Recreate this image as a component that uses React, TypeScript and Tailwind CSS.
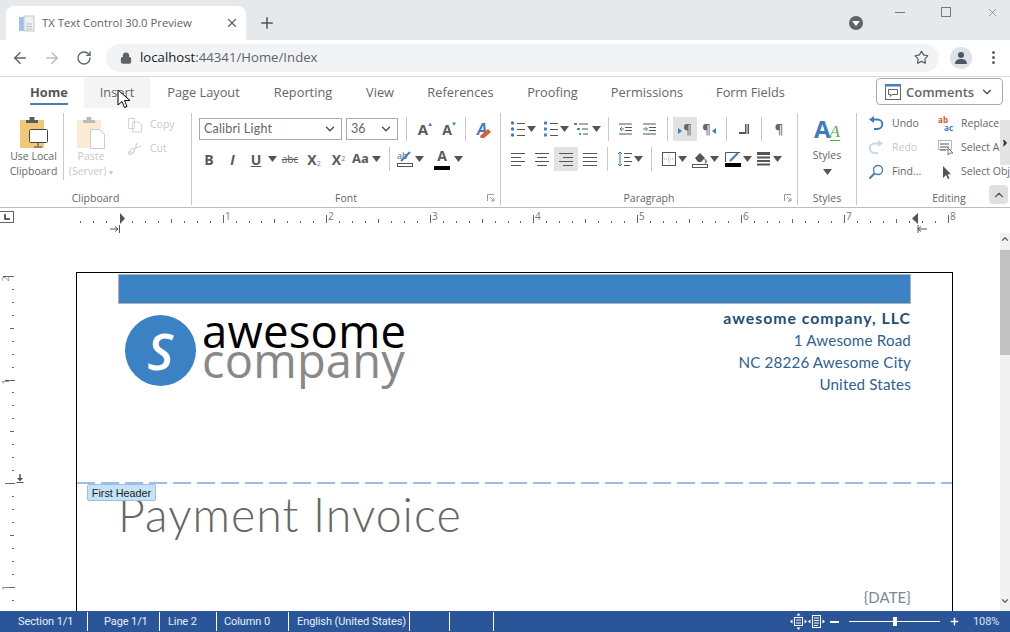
import React from 'react'
import { ArrowLeft, ArrowRight, RotateCw, Lock, Star, X, Plus, ChevronDown, ChevronUp, ChevronRight } from 'lucide-react'

const ui = "font-['Open_Sans',sans-serif]"

const Caret = ({ color = '#555' }: { color?: string }) => (
    <svg width="9" height="6" viewBox="0 0 9 6" className="shrink-0"><path d="M0 0h9L4.5 6z" fill={color} /></svg>
)

const Sep = ({ className = '' }: { className?: string }) => <div className={`w-px h-6 bg-[#c8c8c8] shrink-0 ${className}`} />

const Lines = ({ rows }: { rows: number[][] }) => (
    <svg width="16" height="14" viewBox="0 0 16 14" fill="none" stroke="#555" strokeWidth="1">
        {rows.map((r, i) => <line key={i} x1={r[0]} x2={r[1]} y1={i * 4 + 1.5} y2={i * 4 + 1.5} />)}
    </svg>
)

const BulletIcon = ({ kind }: { kind: 'dot' | 'num' | 'multi' }) => (
    <svg width="16" height="16" viewBox="0 0 16 16" fill="none">
        {kind === 'multi' ? (
            <>
                <rect x="1" y="2" width="3" height="2" fill="#4a86c5" /><rect x="4" y="7" width="3" height="2" fill="#4a86c5" /><rect x="6" y="12" width="2" height="2" fill="#4a86c5" />
                <path d="M6 3h9M9 8h6M10 13h5" stroke="#555" />
            </>
        ) : (
            <>
                {[2, 8, 14].map((y) => kind === 'dot'
                    ? <circle key={y} cx="2.5" cy={y} r="1.7" fill="#3f7cbd" />
                    : <rect key={y} x="1" y={y - 1.5} width="3" height="3" fill="#4a86c5" />)}
                <path d="M7 2.500h8M7 8.500h8M7 14.500h8" stroke="#555" />
            </>
        )}
    </svg>
)

const IndentIcon = ({ flip }: { flip?: boolean }) => (
    <svg width="14" height="12" viewBox="0 0 14 12" fill="none">
        <path d="M1 1h13M7 4.500h7M7 7.500h7M1 11h13" stroke="#555" />
        <path d={flip ? 'M1 6h4M3.500 4l2 2-2 2' : 'M2 6h4M4 4 2 6l2 2'} stroke="#3f7cbd" />
    </svg>
)

const ParaMark = ({ box, dot }: { box?: boolean; dot?: 'l' | 'r' }) => (
    <div className={`w-6 h-6 flex items-center justify-center text-[13px] font-semibold text-[#666] leading-none ${box ? 'bg-[#e2e2e2]' : ''}`}>
        {dot === 'l' && <svg width="4" height="6" viewBox="0 0 4 6" className="mr-px mt-1"><path d="M0 0l4 3-4 3z" fill="#3f7cbd" /></svg>}
        <span>¶</span>
        {dot === 'r' && <svg width="4" height="6" viewBox="0 0 4 6" className="ml-px mt-1"><path d="M4 0 0 3l4 3z" fill="#3f7cbd" /></svg>}
    </div>
)

function RulerH() {
    const zero = 119
    const inch = 103.6
    const marks = []
    for (let i = -3; i <= 66; i++) {
        if (i === 0) continue
        const x = Math.round(zero + (i * inch) / 8)
        if (x > 955 || x < 79) continue
        if (i % 8 === 0) marks.push(<line key={i} x1={x + 0.5} x2={x + 0.5} y1="7" y2="15" stroke="#666" />)
        else if (i % 4 === 0) marks.push(<line key={i} x1={x + 0.5} x2={x + 0.5} y1="11" y2="15" stroke="#666" />)
        else marks.push(<rect key={i} x={x} y="13" width="1" height="2" fill="#666" />)
    }
    return (
        <svg width="1010" height="25" viewBox="0 0 1010 25" className="absolute left-0 top-0">
            {marks}
            {[1, 2, 3, 4, 5, 6, 7, 8].map((n) => (
                <text key={n} x={Math.round(zero + n * inch) + 2} y="12" fontSize="10" fill="#777" fontFamily="Open Sans, sans-serif">{n}</text>
            ))}
            <path d="M120 5v11l5-5.500z" fill="#555" />
            <path d="M110 21h8M115 18.500l3 2.500-3 2.500M119.500 17v8" stroke="#555" fill="none" />
            <path d="M918 5v11l-6-5.500z" fill="#555" />
            <path d="M918 21h9M921 18.500l-3 2.500 3 2.500M918 17v8" stroke="#555" fill="none" />
        </svg>
    )
}

function RulerV() {
    const ticks = []
    for (let i = 0; i < 27; i++) {
        const y = 289 + i * 13 - 233 - (i > 7 ? 1 : 0)
        const abs = i + 1
        if (abs % 8 === 0) ticks.push(<rect key={i} x="5" y={y} width="10" height="1" fill="#666" />)
        else if (abs % 4 === 0) ticks.push(<rect key={i} x="10" y={y} width="4" height="1" fill="#666" />)
        else ticks.push(<rect key={i} x="12" y={y} width="2" height="1" fill="#666" />)
    }
    return (
        <svg width="76" height="378" viewBox="0 0 76 378" className="shrink-0">
            <rect x="3" y="43" width="11" height="1" fill="#666" />
            {ticks}
            {[[9, 46, 2], [9, 149, 1], [9, 355, 1]].map(([x, y, n]) => (
                <text key={y} x={x} y={y} fontSize="9" fill="#888" fontFamily="Open Sans, sans-serif" textAnchor="middle" transform={`rotate(-90 ${x} ${y})`}>{n}</text>
            ))}
            <path d="M20 241v6" stroke="#555" strokeWidth="1.500" />
            <path d="M17 245h6l-3 3.500z" fill="#555" />
            <path d="M16.500 249.500h7" stroke="#555" />
        </svg>
    )
}

export default function App() {
    const tabs = [
        { name: 'Home', w: 'w-[70px]' },
        { name: 'Insert', w: 'w-[66px]' },
        { name: 'Page Layout', w: 'w-[107px]' },
        { name: 'Reporting', w: 'w-[92px]' },
        { name: 'View', w: 'w-[62px]' },
        { name: 'References', w: 'w-[99px]' },
        { name: 'Proofing', w: 'w-[85px]' },
        { name: 'Permissions', w: 'w-[104px]' },
        { name: 'Form Fields', w: 'w-[103px]' },
    ]
    return (
        <div className={`w-[1010px] h-[632px] overflow-hidden flex flex-col relative bg-white text-[#666] ${ui}`}>
            {/* Browser tab strip */}
            <div className="h-10 bg-[#e6e9ec] flex shrink-0">
                <div className="ml-1.5 mt-1.5 w-60 h-[34px] bg-white rounded-t-lg flex items-center pl-[13px] pr-2">
                    <svg width="16" height="17" viewBox="0 0 16 17" className="shrink-0">
                        <rect x="0" y="2" width="6" height="14" fill="#9cc3e8" />
                        <rect x="5" y="1" width="10" height="15" fill="#eef0f3" stroke="#c4c9d0" />
                        <path d="M7 9h6M7 11.500h6M7 14h6" stroke="#b5bac2" />
                    </svg>
                    <span className="ml-[7px] text-[11.3px] text-[#5f6368] whitespace-nowrap">TX Text Control 30.0 Preview</span>
                    <X size={14} strokeWidth={2} className="ml-auto text-[#5f6368] -mr-px" />
                </div>
                <Plus size={18} strokeWidth={2} className="ml-3 mt-3.5 text-[#555]" />
                <div className="ml-auto flex items-start -mr-[5px]">
                    <div className="mt-4 mr-[14px] w-[14px] h-[14px] rounded-full bg-[#5f6368] flex items-center justify-center">
                        <svg width="8" height="5" viewBox="0 0 8 5"><path d="M0 0h8L4 5z" fill="#fff" /></svg>
                    </div>
                    <div className="w-[46px] h-6 flex items-center justify-center"><div className="w-[10px] h-px bg-[#777]" /></div>
                    <div className="w-[46px] h-6 flex items-center justify-center"><div className="w-[10px] h-[10px] border border-[#777]" /></div>
                    <div className="w-[46px] h-6 flex items-center justify-center"><X size={13} strokeWidth={1} className="text-[#555]" /></div>
                </div>
            </div>

            {/* Address bar */}
            <div className="h-[37px] border-b border-[#dadada] flex items-center shrink-0 pb-px">
                <ArrowLeft size={18} strokeWidth={2} className="ml-[11px] text-[#5f6368]" />
                <ArrowRight size={18} strokeWidth={2} className="ml-[14px] text-[#b9bcbf]" />
                <RotateCw size={16} strokeWidth={2} className="ml-[15px] text-[#5f6368]" />
                <div className="ml-[14px] w-[833px] h-7 rounded-full bg-[#f1f3f4] flex items-center pl-3.5 pr-2.5">
                    <Lock size={12} strokeWidth={2.5} fill="#5f6368" className="text-[#5f6368]" />
                    <span className="ml-[8px] mt-px text-[13.2px] text-[#202124]">localhost<span className="text-[#5f6368]">:44341/Home/Index</span></span>
                    <Star size={15} strokeWidth={2} className="ml-auto text-[#5f6368]" />
                </div>
                <div className="ml-[11px] w-[22px] h-[22px] rounded-full bg-[#dee1e6] flex items-center justify-center">
                    <svg width="14" height="14" viewBox="0 0 14 14"><circle cx="7" cy="4" r="3" fill="#4b5565" /><path d="M1 13c0-4 3-5 6-5s6 1 6 5z" fill="#4b5565" /></svg>
                </div>
                <div className="ml-[20px] flex flex-col gap-[2px]">
                    <div className="w-[3px] h-[3px] rounded-full bg-[#5f6368]" />
                    <div className="w-[3px] h-[3px] rounded-full bg-[#5f6368]" />
                    <div className="w-[3px] h-[3px] rounded-full bg-[#5f6368]" />
                </div>
            </div>

            {/* Ribbon tabs */}
            <div className="h-[31px] flex shrink-0 pl-[14px]">
                {tabs.map((t) => (
                    <div key={t.name} className={`${t.w} h-full relative flex justify-center items-center text-[12.8px] shrink-0 ${t.name === 'Insert' ? 'bg-[#f4f4f4]' : ''} ${t.name === 'Home' ? 'font-bold text-[#555]' : ''}`}>
                        {t.name}
                        {t.name === 'Home' && <div className="absolute bottom-[3px] left-4 w-[38px] h-[2px] bg-[#4a7ebb]" />}
                    </div>
                ))}
                <div className="ml-auto mr-[7px] mt-px w-[127px] h-[27px] border border-[#aaa] rounded-sm flex items-center pl-2">
                    <svg width="16" height="16" viewBox="0 0 16 16" fill="none" className="shrink-0">
                        <rect x="0.500" y="1" width="15" height="14.500" fill="#fff" stroke="#666" />
                        <rect x="0" y="0" width="16" height="2.500" fill="#4a7ebb" />
                        <path d="M3.500 5.500h9v5H7l-1.500 2v-2h-2z" stroke="#666" />
                    </svg>
                    <span className="ml-[5px] mt-[2px] text-[13px] font-semibold text-[#666]">Comments</span>
                    <ChevronDown size={14} strokeWidth={2} className="ml-[6px] text-[#444]" />
                </div>
            </div>

            {/* Ribbon */}
            <div className="h-[100px] border-b border-[#bdbdbd] flex shrink-0 relative text-[10.5px] overflow-hidden">
                {/* Clipboard */}
                <div className="w-[192px] shrink-0 mt-[5px] h-[92px] border-r border-[#c8c8c8] relative flex flex-col">
                    <div className="flex flex-1">
                        <div className="w-[64px] h-[67px] border-r border-[#c8c8c8] flex flex-col items-center pr-[1px] pl-[5px]">
                            <svg width="30" height="34" viewBox="0 0 30 34" className="mt-[3px] shrink-0">
                                <rect x="1" y="4" width="24" height="28" fill="#f0c878" />
                                <path d="M7 4h12v3H7zM10.500 1h5v3h-5z" fill="#5c5c5c" />
                                <rect x="10.500" y="13.500" width="18" height="13" rx="1" fill="#fff" stroke="#444" />
                                <path d="M19 27v3M15 31h8" stroke="#444" />
                            </svg>
                            <div className="text-center leading-[15px] whitespace-nowrap -mt-px">Use Local<br />Clipboard</div>
                        </div>
                        <div className="w-[54px] flex flex-col items-center text-[#c9c9c9]">
                            <svg width="30" height="34" viewBox="0 0 30 34" className="mt-[3px] shrink-0">
                                <rect x="1" y="4" width="24" height="28" fill="#faebd2" />
                                <path d="M7 4h12v3H7zM10.500 1h5v3h-5z" fill="#bbb" />
                                <path d="M14.500 13.500h9l5 5v14h-14z" fill="#fff" stroke="#ccc" />
                            </svg>
                            <div className="text-center leading-[15px] whitespace-nowrap -mt-px">Paste<br />(Server) <span className="text-[8px]">▾</span></div>
                        </div>
                        <div className="flex flex-col text-[#c9c9c9]">
                            <div className="h-6 flex items-center ml-[9px]">
                                <svg width="16" height="16" viewBox="0 0 16 16" fill="none" stroke="#d4d4d4"><path d="M1.500 1.500h6v10h-6zM5.500 5h6l3 3v7h-9z" fill="#fff" /></svg>
                                <span className="ml-[7px]">Copy</span>
                            </div>
                            <div className="h-6 flex items-center ml-[9px]">
                                <svg width="16" height="16" viewBox="0 0 16 16" fill="none" stroke="#d4d4d4" strokeWidth="1.300"><path d="M14 5 3 9M10 2 6 13" /><circle cx="3" cy="12" r="1.500" /></svg>
                                <span className="ml-[7px]">Cut</span>
                            </div>
                        </div>
                    </div>
                    <div className="absolute left-0 right-0 -bottom-[2px] text-center">Clipboard</div>
                </div>

                {/* Font */}
                <div className="w-[309px] shrink-0 mt-[5px] h-[92px] border-r border-[#c8c8c8] relative">
                    <div className="flex items-center h-[24px] mt-[4px] pl-[7px]">
                        <div className="w-[143px] h-[22px] border border-[#aaa] flex items-center px-[4px] text-[12.5px] text-[#666]">
                            <span className="font-['Lato',sans-serif] tracking-[0.2px]">Calibri Light</span>
                            <ChevronDown size={14} strokeWidth={2.5} className="ml-auto text-[#555]" />
                        </div>
                        <div className="ml-1 w-[52px] h-[22px] border border-[#aaa] flex items-center px-[4px] text-[12.5px]">
                            <span className="font-['Lato',sans-serif]">36</span>
                            <ChevronDown size={14} strokeWidth={2.5} className="ml-auto text-[#555]" />
                        </div>
                        <Sep className="ml-[8px]" />
                        <div className="ml-[4px] w-6 h-6 flex items-center justify-center text-[15px] font-bold text-[#5a5a5a] relative">A<span className="text-[#3f7cbd] text-[6px] absolute top-[3px] right-[2px]">▲</span></div>
                        <div className="w-6 h-6 flex items-center justify-center text-[14px] font-bold text-[#5a5a5a] relative">A<span className="text-[#3f7cbd] text-[6px] absolute top-[3px] right-[2px]">▼</span></div>
                        <Sep className="ml-[6px]" />
                        <div className="ml-[4px] w-6 h-6 relative flex items-center justify-center text-[16px] font-bold italic text-[#3f7cbd]">
                            A
                            <svg width="14" height="12" viewBox="0 0 14 12" className="absolute right-[2px] bottom-[2px]"><path d="M2 9 10 2l3 3-7 6H3z" fill="#e05a2b" /></svg>
                        </div>
                    </div>
                    <div className="flex items-center h-6 mt-[6px] pl-[5px] text-[#5a5a5a] font-bold">
                        <div className="w-6 text-center text-[14px]">B</div>
                        <div className="w-[23px] text-center text-[14px] italic">I</div>
                        <div className="w-[24px] text-center text-[14px] underline">U</div>
                        <Caret />
                        <div className="ml-[1px] w-6 text-center text-[10px] font-normal line-through">abc</div>
                        <div className="w-6 text-center text-[14px]">X<sub className="text-[7px] text-[#4a86c5] font-normal">2</sub></div>
                        <div className="w-[25px] text-center text-[14px]">X<sup className="text-[7px] text-[#4a86c5] font-normal">2</sup></div>
                        <div className="ml-px w-[19px] text-[13px] whitespace-nowrap">Aa</div>
                        <div className="ml-[1px]"><Caret /></div>
                        <Sep className="ml-[8px]" />
                        <div className="ml-[6px] w-[19px] relative h-6">
                            <span className="absolute top-[2px] left-[1px] text-[9px] font-normal text-[#666]">ab</span>
                            <svg width="19" height="20" viewBox="0 0 19 20" className="absolute left-0 top-[2px]" fill="none">
                                <path d="M5 12 14 3" stroke="#3f7cbd" strokeWidth="2" />
                                <rect x="1.500" y="14.500" width="15" height="3" stroke="#555" />
                            </svg>
                        </div>
                        <Caret />
                        <div className="ml-[9px] w-[18px] h-6 relative text-center text-[14px] leading-[18px]">
                            A
                            <div className="absolute left-[1px] bottom-[1px] w-4 h-1 bg-black" />
                        </div>
                        <div className="ml-[3px]"><Caret /></div>
                    </div>
                    <div className="absolute left-0 right-0 -bottom-[2px] text-center">Font</div>
                    <svg width="8" height="8" viewBox="0 0 8 8" className="absolute right-[5px] bottom-[3px]" fill="none" stroke="#999"><path d="M.5 7V.5H7M3 3l4 4M7 4v3H4" /></svg>
                </div>

                {/* Paragraph */}
                <div className="w-[297px] shrink-0 mt-[5px] h-[92px] border-r border-[#c8c8c8] relative">
                    <div className="flex items-center h-6 mt-[4px] pl-[9px]">
                        <BulletIcon kind="dot" /><div className="ml-[1px]"><Caret /></div>
                        <div className="ml-[7px]"><BulletIcon kind="num" /></div><div className="ml-[1px]"><Caret /></div>
                        <div className="ml-[4px]"><BulletIcon kind="multi" /></div><div className="ml-[3px]"><Caret /></div>
                        <Sep className="ml-[7px]" />
                        <div className="ml-[4px] w-6 flex justify-center"><IndentIcon /></div>
                        <div className="w-6 flex justify-center"><IndentIcon flip /></div>
                        <Sep className="ml-[6px]" />
                        <div className="ml-[5px]"><ParaMark box dot="l" /></div>
                        <ParaMark dot="r" />
                        <Sep className="ml-[5px]" />
                        <div className="ml-[5px] w-6 flex justify-center">
                            <svg width="10" height="10" viewBox="0 0 10 10"><path d="M0 8h6V0h1.500v10H0zM8.500 0H10v10H8.500z" fill="#555" /></svg>
                        </div>
                        <Sep className="ml-[5px]" />
                        <div className="ml-[5px]"><ParaMark /></div>
                    </div>
                    <div className="flex items-center h-6 mt-[6px] pl-[5px]">
                        <div className="w-6 h-6 flex items-center justify-center"><Lines rows={[[1, 15], [1, 11], [1, 15], [1, 11]]} /></div>
                        <div className="w-6 h-6 flex items-center justify-center"><Lines rows={[[1, 15], [3, 13], [1, 15], [3, 13]]} /></div>
                        <div className="w-6 h-6 flex items-center justify-center bg-[#e2e2e2]"><Lines rows={[[1, 15], [5, 15], [1, 15], [5, 15]]} /></div>
                        <div className="w-6 h-6 flex items-center justify-center"><Lines rows={[[1, 15], [1, 15], [1, 15], [1, 15]]} /></div>
                        <Sep className="ml-[5px]" />
                        <div className="ml-[9px]">
                            <svg width="16" height="16" viewBox="0 0 16 16" fill="none"><path d="M3 1v14M1 3l2-2 2 2M1 13l2 2 2-2" stroke="#3f7cbd" /><path d="M7 2.500h8M7 6.500h6M7 10.500h8M7 14.500h6" stroke="#555" /></svg>
                        </div>
                        <div className="ml-[1px]"><Caret /></div>
                        <Sep className="ml-[8px]" />
                        <div className="ml-[9px]">
                            <svg width="16" height="16" viewBox="0 0 16 16" fill="none"><rect x="1.500" y="1.500" width="13" height="13" stroke="#555" /><path d="M8 3v10M3 8h10" stroke="#aaa" strokeDasharray="1 1" /></svg>
                        </div>
                        <div className="ml-[1px]"><Caret /></div>
                        <div className="ml-[5px]">
                            <svg width="16" height="17" viewBox="0 0 16 17" fill="none"><path d="M3 7 8 2l5 5-4 4H6z" fill="#555" /><path d="M13 8c1 2 2 3 0 4" stroke="#3f7cbd" strokeWidth="1.500" /><rect x="0.500" y="13.500" width="15" height="3" fill="#fff" stroke="#555" /></svg>
                        </div>
                        <div className="ml-[2px]"><Caret /></div>
                        <div className="ml-[6px]">
                            <svg width="16" height="16" viewBox="0 0 16 16" fill="none"><path d="M15 1.500H.5V11" stroke="#555" /><path d="M5 10 13 2" stroke="#3f7cbd" strokeWidth="2" /><rect x="0" y="12" width="16" height="4" fill="#000" /></svg>
                        </div>
                        <div className="ml-[2px]"><Caret /></div>
                        <div className="ml-[5px]">
                            <svg width="13" height="14" viewBox="0 0 13 14"><rect y="0" width="13" height="3" fill="#555" /><rect y="4.500" width="13" height="2" fill="#555" /><rect y="8" width="13" height="2" fill="#555" /><rect y="11.500" width="13" height="2" fill="#555" /></svg>
                        </div>
                        <div className="ml-[3px]"><Caret /></div>
                    </div>
                    <div className="absolute left-0 right-0 -bottom-[2px] text-center">Paragraph</div>
                    <svg width="8" height="8" viewBox="0 0 8 8" className="absolute right-[5px] bottom-[3px]" fill="none" stroke="#999"><path d="M.5 7V.5H7M3 3l4 4M7 4v3H4" /></svg>
                </div>

                {/* Styles */}
                <div className="w-[59px] shrink-0 mt-[5px] h-[92px] border-r border-[#c8c8c8] relative flex flex-col items-center">
                    <div className="mt-[2px] h-[26px] flex items-end leading-none">
                        <span className="text-[#3f7cbd] font-bold text-[24px] leading-[24px]">A</span>
                        <span className="font-['Liberation_Serif',serif] italic text-[#4fae4f] text-[17px] border-b border-[#4fae4f] -ml-px">A</span>
                    </div>
                    <div className="mt-[7px]">Styles</div>
                    <div className="mt-[5px]"><Caret /></div>
                    <div className="absolute left-0 right-0 -bottom-[2px] text-center">Styles</div>
                </div>

                {/* Editing */}
                <div className="w-[153px] shrink-0 mt-[5px] h-[92px] relative flex pl-[11px] whitespace-nowrap">
                    <div className="w-[77px] -mt-px">
                        <div className="h-6 flex items-center">
                            <svg width="16" height="16" viewBox="0 0 16 16" fill="none"><path d="M5 3.500h4.500a4.500 4.500 0 0 1 0 9.500H6" stroke="#3f7cbd" strokeWidth="2" /><path d="M6 0 1 3.500 6 7z" fill="#3f7cbd" /></svg>
                            <span className="ml-2">Undo</span>
                        </div>
                        <div className="h-6 flex items-center text-[#c9c9c9]">
                            <svg width="16" height="16" viewBox="0 0 16 16" fill="none"><path d="M11 3.500H6.500a4.500 4.500 0 0 0 0 9.500H10" stroke="#c4d8ec" strokeWidth="2" /><path d="m10 0 5 3.500L10 7z" fill="#c4d8ec" /></svg>
                            <span className="ml-2">Redo</span>
                        </div>
                        <div className="h-6 flex items-center">
                            <svg width="16" height="16" viewBox="0 0 16 16" fill="none" stroke="#3f7cbd" strokeWidth="1.300"><circle cx="10" cy="6" r="4.500" /><path d="M6.500 9.500 1.500 14.500" strokeWidth="2" /></svg>
                            <span className="ml-2">Find...</span>
                        </div>
                    </div>
                    <div className="-mt-px">
                        <div className="h-6 flex items-center">
                            <div className="w-4 text-[8px] leading-[8px] font-bold shrink-0">
                                <div className="text-[#d4552c]">ab</div>
                                <div className="ml-[6px] text-[#3f7cbd]">ac</div>
                            </div>
                            <span className="ml-[7px]">Replace...</span>
                        </div>
                        <div className="h-6 flex items-center">
                            <svg width="16" height="16" viewBox="0 0 16 16" fill="none"><rect x="0.500" y="0.500" width="13" height="9" stroke="#3f7cbd" strokeDasharray="1 1" /><path d="M2 4h9M2 7h9M2 10h6" stroke="#555" /><path d="M10 8v7l2-2h3z" fill="#fff" stroke="#777" /></svg>
                            <span className="ml-[7px]">Select All</span>
                        </div>
                        <div className="h-6 flex items-center">
                            <svg width="16" height="16" viewBox="0 0 16 16"><path d="M5 2v12l3-3 2 4 1.500-.7-2-4H13z" fill="#555" /></svg>
                            <span className="ml-[7px]">Select Obj</span>
                        </div>
                    </div>
                    <div className="absolute -bottom-[2px] left-[57px] w-[70px] text-center">Editing</div>
                </div>

                {/* Overlaid scroll and collapse buttons */}
                <div className="absolute right-0 top-[12px] w-[10px] h-[45px] bg-[#e4e4e4] flex items-center justify-center">
                    <ChevronRight size={12} strokeWidth={3} fill="#333" className="text-[#333]" />
                </div>
                <div className="absolute right-[2px] top-[77px] w-[19px] h-[19px] rounded-sm bg-[#e0e0e0] flex items-center justify-center">
                    <ChevronUp size={14} strokeWidth={2} className="text-[#555]" />
                </div>
            </div>

            {/* Horizontal ruler */}
            <div className="h-[25px] shrink-0 relative border-0">
                <RulerH />
                <div className="absolute left-0 top-[3px] w-[14px] h-[12px] border border-[#666] border-l-0 flex items-center justify-center">
                    <svg width="6" height="6" viewBox="0 0 6 6"><path d="M1 0v5h5" stroke="#333" strokeWidth="1.500" fill="none" /></svg>
                </div>
            </div>

            {/* Document area */}
            <div className="flex-1 flex overflow-hidden">
                <RulerV />
                <div className="mt-[39px] w-[877px] border border-b-0 border-black relative flex flex-col">
                    <div className="h-[209px] px-[41px] pt-px">
                        <div className="h-[30px] bg-[#3a82c4] border border-[#a9b4bf]" />
                        <div className="flex justify-between">
                            <div className="flex ml-[7px] mt-[11px]">
                                <div className="w-[71px] h-[71px] rounded-full bg-[#3a82c4] flex items-center justify-center text-white text-[50px] font-semibold italic leading-none shrink-0">S</div>
                                <div className="ml-[6px] leading-[30px] tracking-[0.2px]">
                                    <div className="text-black text-[45.5px] h-[30px]">awesome</div>
                                    <div className="text-[#888] text-[47px] h-[30px]">company</div>
                                </div>
                            </div>
                            <div className="mt-[3px] text-right text-[15.2px] leading-[22px] text-[#2f5f93] font-['Lato',sans-serif] tracking-[0.15px]">
                                <div className="font-bold text-[15.8px] text-[#1f4e79] tracking-[1px]">awesome company, LLC</div>
                                <div>1 Awesome Road</div>
                                <div>NC 28226 Awesome City</div>
                                <div>United States</div>
                            </div>
                        </div>
                    </div>
                    <div className="h-[2px] shrink-0 bg-[repeating-linear-gradient(90deg,#9dbce8_0,#9dbce8_18px,transparent_18px,transparent_24px)]" />
                    <div className="absolute left-[10px] top-[211px] w-[69px] h-[17px] pt-px bg-[#c5e3f6] border border-[#9dbce8] rounded-[2px] font-['Liberation_Sans',sans-serif] text-[10.8px] text-[#222] flex items-center justify-center">First Header</div>
                    <div className="px-[41px] flex-1 flex flex-col">
                        <div className="mt-[1px] font-['Lato',sans-serif] font-light text-[46.5px] tracking-[1px] leading-[58px] text-[#666] whitespace-nowrap">Payment Invoice</div>
                        <div className="mt-[43px] text-right font-['Lato',sans-serif] text-[15px] tracking-[0.1px] text-[#7b8794]">{'{DATE}'}</div>
                    </div>
                </div>
                <div className="ml-[47px] w-[10px] bg-[#f1f1f1] flex flex-col items-center justify-between">
                    <div className="flex flex-col items-center w-full">
                        <ChevronUp size={10} strokeWidth={3} className="text-[#666] my-[1px]" />
                        <div className="mt-[5px] w-full h-[105px] bg-[#c1c1c1]" />
                    </div>
                    <ChevronDown size={10} strokeWidth={3} className="text-[#666] mb-[5px]" />
                </div>
            </div>

            {/* Status bar */}
            <div className="h-[21px] bg-[#2a5699] shrink-0 flex items-center text-[#e8eef7] text-[11px] tracking-[-0.1px] font-['Roboto',sans-serif]">
                {[
                    { t: 'Section 1/1', w: 'w-[88px]', p: 'pl-[18px]' },
                    { t: 'Page 1/1', w: 'w-[72px]', p: 'pl-[16px]' },
                    { t: 'Line 2', w: 'w-[57px]', p: 'pl-[8px]' },
                    { t: 'Column 0', w: 'w-[72px]', p: 'pl-[7px]' },
                    { t: 'English (United States)', w: 'w-[121px]', p: 'pl-[8px]' },
                    { t: '', w: 'w-[40px]', p: '' },
                    { t: '', w: 'w-[44px]', p: '' },
                ].map((c, i) => (
                    <div key={i} className={`${c.w} ${c.p} h-[19px] pt-px border-r border-white flex items-center whitespace-nowrap shrink-0`}>{c.t}</div>
                ))}
                <div className="ml-[296px] flex items-center">
                    <svg width="17" height="17" viewBox="0 0 17 17" fill="none"><rect x="4.500" y="4.500" width="8" height="8" stroke="#fff" /><path d="M6 7h5M6 10h5" stroke="#fff" /><path d="M8.500 0l2 2.500h-4zM8.500 17l2-2.500h-4zM0 8.500 2.500 6.500v4zM17 8.500l-2.500-2v4z" fill="#fff" /></svg>
                    <svg width="17" height="13" viewBox="0 0 17 13" fill="none" className="ml-px"><rect x="4.500" y="0.500" width="8" height="12" stroke="#fff" /><path d="M6 3h5M6 5.500h5M6 8h5M6 10.500h4" stroke="#fff" /><path d="M0 6.500 2.500 4.500v4zM17 6.500l-2.500-2v4z" fill="#fff" /></svg>
                    <div className="ml-[5px] w-[9px] h-[2px] bg-white" />
                    <div className="ml-[10px] w-[91px] h-px bg-white relative">
                        <div className="absolute left-[44px] -top-[4px] w-[4px] h-[9px] bg-white" />
                    </div>
                    <Plus size={11} strokeWidth={3} className="ml-[9px] text-white" />
                    <span className="ml-[13px] mt-px text-[#dbe4f2]">108%</span>
                </div>
            </div>

            {/* Mouse pointer */}
            <svg width="16" height="20" viewBox="0 0 16 20" className="absolute left-[117px] top-[89px]">
                <path d="M1 1v15l4-3.500 2.500 6 2.500-1-2.500-6H13z" fill="#fff" stroke="#000" />
            </svg>
        </div>
    )
}
